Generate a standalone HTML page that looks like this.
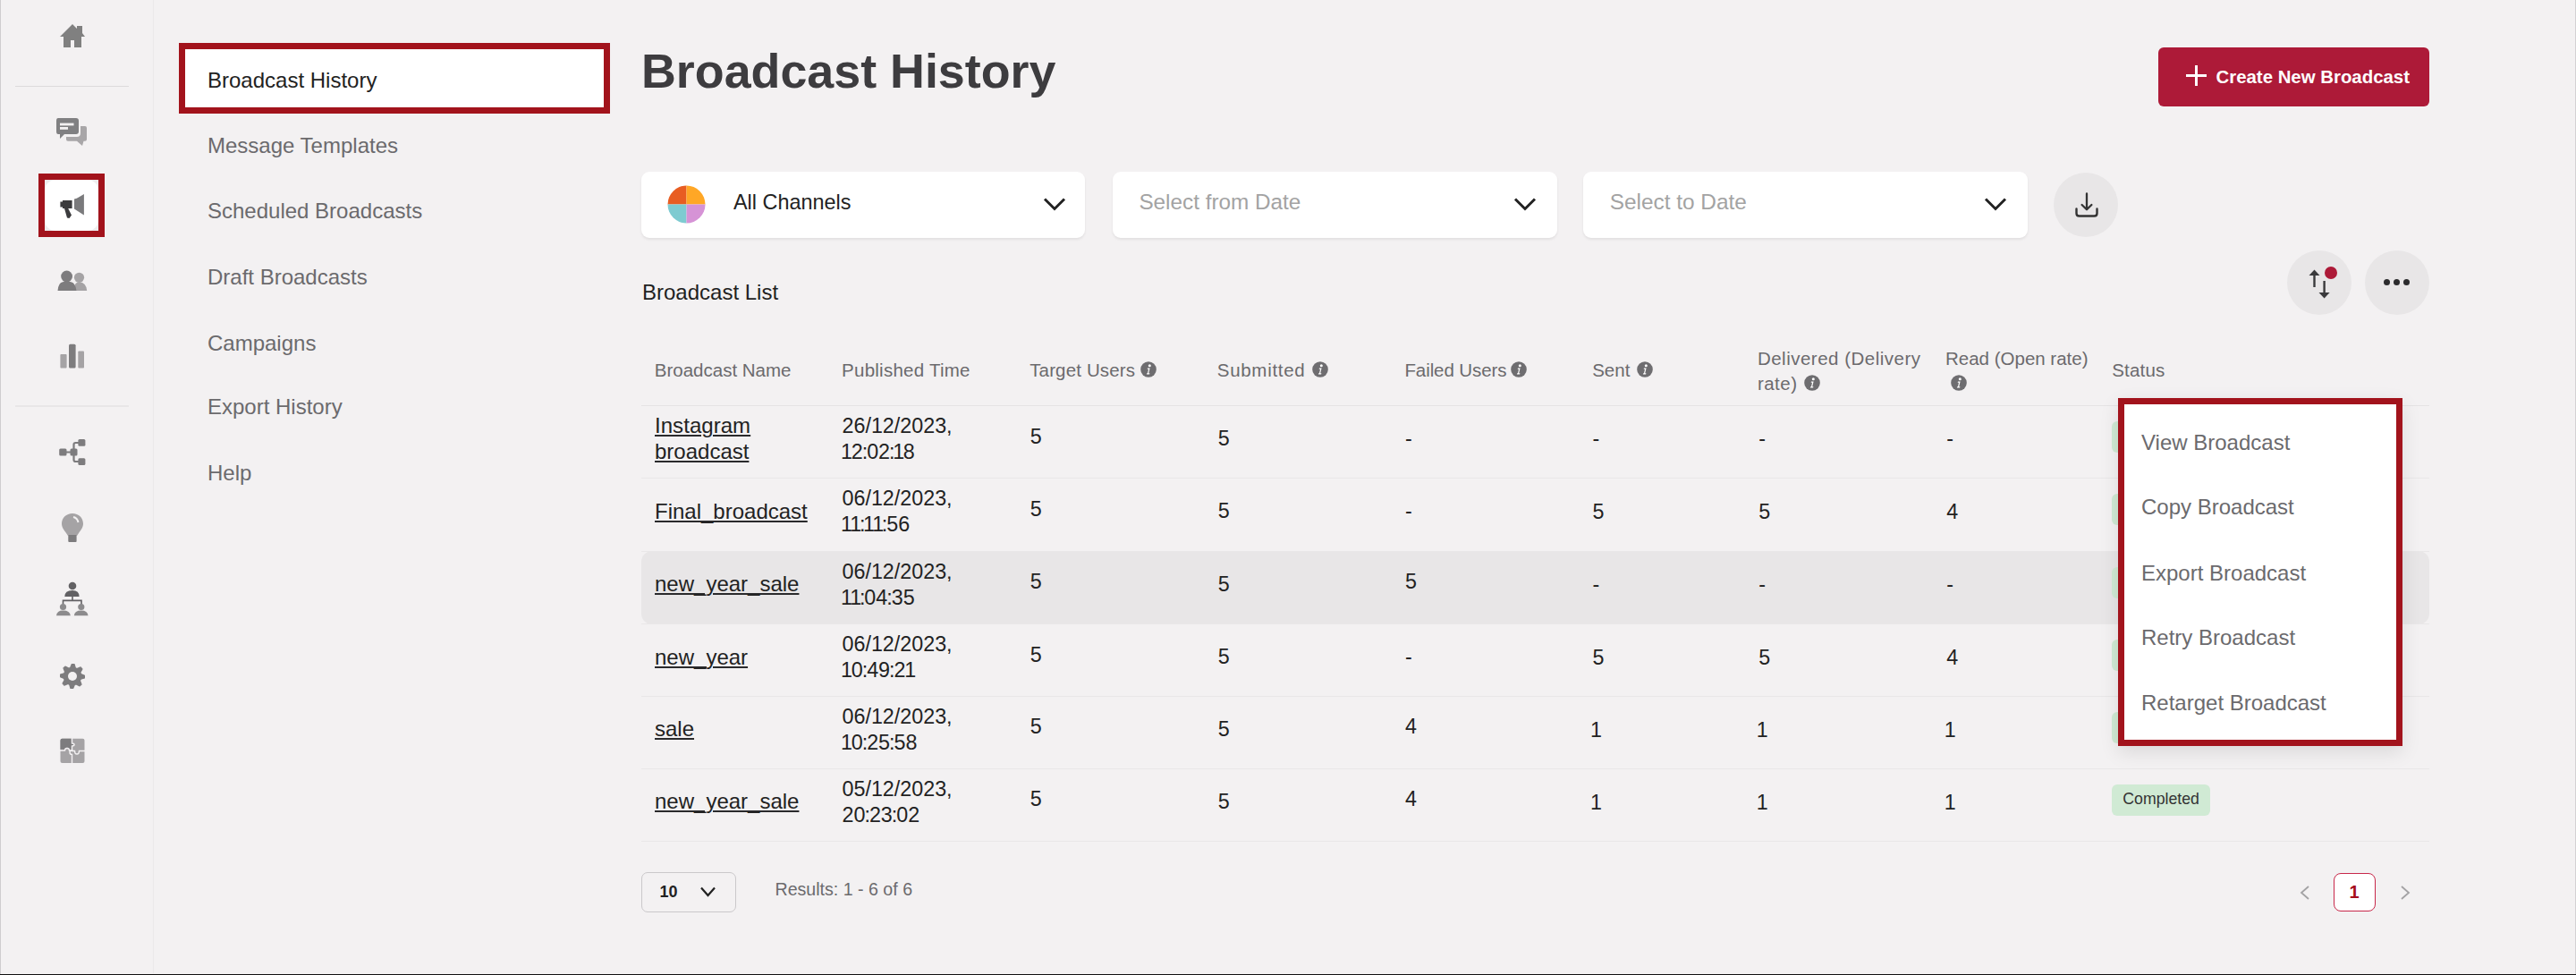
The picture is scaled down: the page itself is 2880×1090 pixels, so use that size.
<!DOCTYPE html>
<html><head><meta charset="utf-8"><title>Broadcast History</title>
<style>
html,body{margin:0;padding:0;background:#f3f1f2;}
body{width:2880px;height:1090px;overflow:hidden;position:relative;background:#f3f1f2;font-family:"Liberation Sans", sans-serif;}
.a{position:absolute;}
.t{position:absolute;white-space:nowrap;line-height:1;}
.n1{margin:0 -1.4px;}.nc{margin:0 -1px;}.m1{margin-left:-2.5px;}
u{text-decoration:underline;text-decoration-thickness:1.8px;text-underline-offset:2.4px;text-decoration-color:#2a2a2c;}
</style></head><body>

<div class="a" style="left:0.0px;top:0.0px;width:1.2px;height:1090.0px;background:#cfcdcf;"></div>
<div class="a" style="left:2879.0px;top:0.0px;width:1.0px;height:1090.0px;background:#d3d1d3;"></div>
<div class="a" style="left:0.0px;top:1088.5px;width:2880.0px;height:1.5px;background:#111;"></div>
<div class="a" style="left:171.0px;top:0.0px;width:1.0px;height:1088.0px;background:#ebe9ea;"></div>
<div class="a" style="left:17.0px;top:95.5px;width:127.0px;height:1.5px;background:#dcdadb;"></div>
<div class="a" style="left:17.0px;top:453.0px;width:127.0px;height:1.5px;background:#e8e6e7;"></div>
<svg class="a" style="left:66px;top:26px;" width="30" height="28" viewBox="0 0 30 28"><path d="M1 15 L15 1 L20 6 L20 3 L26 3 L26 11 L29 15 L25 15 L25 27 L17 27 L17 19 L13 19 L13 27 L5 27 L5 15 Z" fill="#808080"/></svg>
<svg class="a" style="left:62px;top:131px;" width="36" height="34" viewBox="0 0 36 34"><path d="M3 1 H23 Q26 1 26 4 V16 Q26 19 23 19 H10 L5 24 V19 H3 Q1 19 1 16 V4 Q1 1 3 1 Z" fill="#808082"/><rect x="5" y="6.6" width="15.5" height="2.8" fill="#f3f1f2"/><rect x="5" y="11" width="9" height="2.8" fill="#f3f1f2"/><path d="M28 10 H33 Q35 10 35 12 V24.7 Q35 26.7 33 26.7 H31.5 L30 32 L24 26.7 H14 Q12 26.7 12 24.7 V22 H24 Q28 22 28 18 Z" fill="#a8a6a8"/></svg>
<div class="a" style="left:42.5px;top:193.8px;width:74.1px;height:71.1px;border:7px solid #a2131c;box-sizing:border-box;background:#eeeced;"></div>
<div class="a" style="left:49.5px;top:200.8px;width:60.1px;height:57.1px;background:#fff;border-radius:12px;"></div>
<svg class="a" style="left:64px;top:214px;" width="34" height="34" viewBox="0 0 34 34"><path d="M3.4 11.5 H6 V10 H16.6 V19 H12.2 L16 26.5 L13.5 30 L11 29.5 L8 19 H6 V17.5 H3.4 Z" fill="#3b3b3d"/><path d="M19 8.6 Q22 8 24 6.5 L29.9 2.9 V26.4 L19 19.5 Z" fill="#7a7a7c"/></svg>
<svg class="a" style="left:63px;top:302px;" width="36" height="25" viewBox="0 0 36 25"><circle cx="25.5" cy="8.3" r="5.6" fill="#a5a3a5"/><path d="M20 23 L20.5 17 Q22 13.3 25.5 13.3 Q33.5 14 34.2 23 Z" fill="#a5a3a5"/><circle cx="11.6" cy="7" r="6.4" fill="#7d7c7e"/><path d="M1.5 23 Q2 14.5 7 13.2 Q9.5 12.6 11.6 12.6 Q14 12.6 16.5 13.2 Q21.5 14.5 22.5 23 Z" fill="#7d7c7e"/></svg>
<svg class="a" style="left:66px;top:384px;" width="30" height="29" viewBox="0 0 30 29"><rect x="1.4" y="11.9" width="7.2" height="15.7" rx="1" fill="#a5a3a5"/><rect x="11" y="0.8" width="7.6" height="26.8" rx="1.5" fill="#7d7c7e"/><rect x="21.3" y="8.5" width="6.7" height="19.1" rx="1" fill="#a5a3a5"/></svg>
<svg class="a" style="left:65px;top:490px;" width="32" height="32" viewBox="0 0 32 32"><rect x="1.2" y="11.5" width="8.3" height="8" rx="1.5" fill="#7d7c7e"/><rect x="13.5" y="11.5" width="8" height="8" rx="1.5" fill="#7d7c7e"/><rect x="22.4" y="1" width="8" height="7.7" rx="1.5" fill="#7d7c7e"/><rect x="22.4" y="22.3" width="8" height="7.7" rx="1.5" fill="#7d7c7e"/><path d="M9 15.5 H14 M17.5 12 V7 Q17.5 5 19.5 5 H23 M17.5 19 V24 Q17.5 26 19.5 26 H23" stroke="#7d7c7e" stroke-width="2.2" fill="none"/></svg>
<svg class="a" style="left:68px;top:573px;" width="26" height="34" viewBox="0 0 26 34"><path d="M13 1 C20 1 25 6 25 12.5 C25 17 22 20 20 23 L18 26 H8 L6 23 C4 20 1 17 1 12.5 C1 6 6 1 13 1 Z" fill="#a5a3a5"/><rect x="8.3" y="25" width="9.3" height="8" rx="1" fill="#7d7c7e"/><path d="M14 5 Q18.5 6 19.5 11" stroke="#f3f1f2" stroke-width="2" fill="none"/></svg>
<svg class="a" style="left:62px;top:649px;" width="38" height="41" viewBox="0 0 38 41"><circle cx="19" cy="6" r="4.3" fill="#626164"/><path d="M10.3 18 Q10.3 11 19 11 Q26.6 11 26.6 18 Z" fill="#626164"/><path d="M19 18 V22.4 M8.5 27 V22.4 H29 V27" stroke="#626164" stroke-width="1.6" fill="none"/><circle cx="8.5" cy="29.5" r="3.6" fill="#8c8b8d"/><path d="M1 39.3 Q1.5 33.5 8.5 33.5 Q16.3 33.5 16.8 39.3 Z" fill="#8c8b8d"/><circle cx="28.8" cy="29.5" r="3.6" fill="#8c8b8d"/><path d="M20.8 39.3 Q21.3 33.5 28.8 33.5 Q36 33.5 36.5 39.3 Z" fill="#8c8b8d"/></svg>
<svg class="a" style="left:67px;top:741.5px;" width="28" height="28" viewBox="0 0 28 28"><path d="M13.33,0.42 L16.00,0.55 L17.30,4.77 L19.04,5.59 L23.13,3.92 L24.92,5.90 L22.86,9.81 L23.51,11.62 L27.58,13.33 L27.45,16.00 L23.23,17.30 L22.41,19.04 L24.08,23.13 L22.10,24.92 L18.19,22.86 L16.38,23.51 L14.67,27.58 L12.00,27.45 L10.70,23.23 L8.96,22.41 L4.87,24.08 L3.08,22.10 L5.14,18.19 L4.49,16.38 L0.42,14.67 L0.55,12.00 L4.77,10.70 L5.59,8.96 L3.92,4.87 L5.90,3.08 L9.81,5.14 L11.62,4.49 Z" fill="#7d7c7e" stroke="#7d7c7e" stroke-width="1.2" stroke-linejoin="round"/><circle cx="14" cy="14" r="5" fill="#f3f1f2"/></svg>
<svg class="a" style="left:67px;top:825px;" width="28" height="29" viewBox="0 0 28 29"><rect x="0.5" y="0.7" width="27" height="27.4" rx="2" fill="#a5a3a5"/><path d="M0.5 2.7 Q0.5 0.7 2.5 0.7 H12.8 V5 Q15.5 5 15.5 7 Q15.5 9 12.8 9 V12.8 H10 Q10 10.5 8 10.5 Q6 10.5 6 12.8 H0.5 Z" fill="#7d7c7e"/><path d="M13.5 0 V6 Q16 6 16 7.5 Q16 9 13.5 9 V14 Q11 14 11 16 Q11 18.5 13.5 18.5 V29 M0 14 H5.5 Q5.5 11.5 8 11.5 Q10.5 11.5 10.5 14 H14 V14.5 H16.5 Q16.5 18 19 18 Q21.5 18 21.5 14.5 H28" stroke="#f3f1f2" stroke-width="1.4" fill="none"/></svg>
<div class="a" style="left:200.0px;top:48.0px;width:482.0px;height:78.5px;border:7px solid #a2131c;box-sizing:border-box;background:#fff;"></div>
<div class="t" style="left:232.0px;top:77.7px;font-size:24px;color:#222;font-weight:400;">Broadcast History</div>
<div class="t" style="left:232.0px;top:150.5px;font-size:24px;color:#6b6a6d;font-weight:400;">Message Templates</div>
<div class="t" style="left:232.0px;top:223.7px;font-size:24px;color:#6b6a6d;font-weight:400;">Scheduled Broadcasts</div>
<div class="t" style="left:232.0px;top:297.6px;font-size:24px;color:#6b6a6d;font-weight:400;">Draft Broadcasts</div>
<div class="t" style="left:232.0px;top:371.7px;font-size:24px;color:#6b6a6d;font-weight:400;">Campaigns</div>
<div class="t" style="left:232.0px;top:443.4px;font-size:24px;color:#6b6a6d;font-weight:400;">Export History</div>
<div class="t" style="left:232.0px;top:517.2px;font-size:24px;color:#6b6a6d;font-weight:400;">Help</div>
<div class="t" style="left:717.0px;top:53.1px;font-size:53.8px;color:#3d3c3f;font-weight:700;">Broadcast History</div>
<div class="a" style="left:2413.0px;top:53.0px;width:303.0px;height:66.0px;background:#ad1a38;border-radius:6px;"></div>
<svg class="a" style="left:2443px;top:72px;" width="25" height="25" viewBox="0 0 25 25"><path d="M12.5 1 V24 M1 12.5 H24" stroke="#fff" stroke-width="3"/></svg>
<div class="t" style="left:2477.5px;top:75.7px;font-size:20.4px;color:#fff;font-weight:700;">Create New Broadcast</div>
<div class="a" style="left:717.0px;top:192.0px;width:496.0px;height:73.5px;background:#fff;border-radius:9px;box-shadow:0 2px 3px rgba(0,0,0,0.07);"></div>
<div class="a" style="left:1243.6px;top:192.0px;width:497.4px;height:73.5px;background:#fff;border-radius:9px;box-shadow:0 2px 3px rgba(0,0,0,0.07);"></div>
<div class="a" style="left:1770.0px;top:192.0px;width:496.6px;height:73.5px;background:#fff;border-radius:9px;box-shadow:0 2px 3px rgba(0,0,0,0.07);"></div>
<svg class="a" style="left:746px;top:207px;" width="43" height="43" viewBox="0 0 43 43"><path d="M21.5 21.5 V0.5 A21 21 0 0 0 0.5 21.5 Z" fill="#e85d22"/><path d="M21.5 21.5 V0.5 A21 21 0 0 1 42.5 21.5 Z" fill="#ffa726"/><path d="M21.5 21.5 H0.5 A21 21 0 0 0 21.5 42.5 Z" fill="#7ecbd1"/><path d="M21.5 21.5 H42.5 A21 21 0 0 1 21.5 42.5 Z" fill="#d693d6"/></svg>
<div class="t" style="left:820.0px;top:215.2px;font-size:23.4px;color:#222;font-weight:400;">All Channels</div>
<div class="t" style="left:1273.4px;top:214.4px;font-size:24.3px;color:#a3a3a3;font-weight:400;">Select from Date</div>
<div class="t" style="left:1799.7px;top:214.3px;font-size:24.4px;color:#a3a3a3;font-weight:400;">Select to Date</div>
<svg class="a" style="left:1166px;top:220px;" width="26" height="17" viewBox="0 0 26 17"><path d="M2 2.5 L13 13.5 L24 2.5" stroke="#222" stroke-width="3" fill="none"/></svg>
<svg class="a" style="left:1692px;top:220px;" width="26" height="17" viewBox="0 0 26 17"><path d="M2 2.5 L13 13.5 L24 2.5" stroke="#222" stroke-width="3" fill="none"/></svg>
<svg class="a" style="left:2218px;top:220px;" width="26" height="17" viewBox="0 0 26 17"><path d="M2 2.5 L13 13.5 L24 2.5" stroke="#222" stroke-width="3" fill="none"/></svg>
<div class="a" style="left:2296.0px;top:192.5px;width:72.0px;height:72.0px;background:#e8e6e7;border-radius:50%;"></div>
<svg class="a" style="left:2318px;top:214px;" width="30" height="31" viewBox="0 0 30 31"><path d="M15 2.5 V20 M9.6 15 L15 20.3 L20.4 15" stroke="#333" stroke-width="2.3" fill="none" stroke-linecap="round" stroke-linejoin="round"/><path d="M3.5 19.5 V24.5 Q3.5 27.5 6.5 27.5 H23.5 Q26.5 27.5 26.5 24.5 V19.5" stroke="#333" stroke-width="2.4" fill="none" stroke-linecap="round"/></svg>
<div class="t" style="left:718.0px;top:315.4px;font-size:24px;color:#1f1f22;font-weight:400;">Broadcast List</div>
<div class="a" style="left:2557.0px;top:279.5px;width:72.0px;height:72.0px;background:#e8e6e7;border-radius:50%;"></div>
<div class="a" style="left:2644.0px;top:279.5px;width:72.0px;height:72.0px;background:#e8e6e7;border-radius:50%;"></div>
<svg class="a" style="left:2578px;top:298px;" width="32" height="38" viewBox="0 0 32 38"><path d="M9.5 23 V8" stroke="#3a3a3c" stroke-width="2.4"/><path d="M3.5 10 L9.5 3.5 L15.5 10 Z" fill="#3a3a3c"/><path d="M20.6 16 V31" stroke="#3a3a3c" stroke-width="2.4"/><path d="M14.5 29 L20.6 35.5 L26.6 29 Z" fill="#3a3a3c"/></svg>
<div class="a" style="left:2598.5px;top:298.0px;width:14.0px;height:14.0px;background:#ad1a38;border-radius:50%;"></div>
<div class="a" style="left:2665.2px;top:312.2px;width:7.0px;height:7.0px;background:#2b2b2d;border-radius:50%;"></div>
<div class="a" style="left:2676.1px;top:312.2px;width:7.0px;height:7.0px;background:#2b2b2d;border-radius:50%;"></div>
<div class="a" style="left:2686.9px;top:312.2px;width:7.0px;height:7.0px;background:#2b2b2d;border-radius:50%;"></div>
<div class="t" style="left:731.8px;top:403.6px;font-size:20.5px;color:#6b6a6d;font-weight:400;letter-spacing:0px;">Broadcast Name</div>
<div class="t" style="left:941.1px;top:403.6px;font-size:20.5px;color:#6b6a6d;font-weight:400;letter-spacing:0.25px;">Published Time</div>
<div class="t" style="left:1151.2px;top:403.6px;font-size:20.5px;color:#6b6a6d;font-weight:400;letter-spacing:0.15px;">Target Users</div>
<svg class="a" style="left:1274.7px;top:403.5px;" width="18" height="18" viewBox="0 0 18 18"><circle cx="9" cy="9" r="8.8" fill="#6e6d70"/><circle cx="10.3" cy="4.7" r="1.5" fill="#fff"/><path d="M8 7.6 H10.6 L9.2 13.2 H10.4 L10.1 14.4 H6.9 L7.2 13.2 H8 L9 8.8 H7.7 Z" fill="#fff"/></svg>
<div class="t" style="left:1360.8px;top:403.6px;font-size:20.5px;color:#6b6a6d;font-weight:400;letter-spacing:0.7px;">Submitted</div>
<svg class="a" style="left:1466.5px;top:403.5px;" width="18" height="18" viewBox="0 0 18 18"><circle cx="9" cy="9" r="8.8" fill="#6e6d70"/><circle cx="10.3" cy="4.7" r="1.5" fill="#fff"/><path d="M8 7.6 H10.6 L9.2 13.2 H10.4 L10.1 14.4 H6.9 L7.2 13.2 H8 L9 8.8 H7.7 Z" fill="#fff"/></svg>
<div class="t" style="left:1570.4px;top:403.6px;font-size:20.5px;color:#6b6a6d;font-weight:400;letter-spacing:-0.08px;">Failed Users</div>
<svg class="a" style="left:1689px;top:403.5px;" width="18" height="18" viewBox="0 0 18 18"><circle cx="9" cy="9" r="8.8" fill="#6e6d70"/><circle cx="10.3" cy="4.7" r="1.5" fill="#fff"/><path d="M8 7.6 H10.6 L9.2 13.2 H10.4 L10.1 14.4 H6.9 L7.2 13.2 H8 L9 8.8 H7.7 Z" fill="#fff"/></svg>
<div class="t" style="left:1780.2px;top:403.6px;font-size:20.5px;color:#6b6a6d;font-weight:400;">Sent</div>
<svg class="a" style="left:1830px;top:403.5px;" width="18" height="18" viewBox="0 0 18 18"><circle cx="9" cy="9" r="8.8" fill="#6e6d70"/><circle cx="10.3" cy="4.7" r="1.5" fill="#fff"/><path d="M8 7.6 H10.6 L9.2 13.2 H10.4 L10.1 14.4 H6.9 L7.2 13.2 H8 L9 8.8 H7.7 Z" fill="#fff"/></svg>
<div class="t" style="left:1964.9px;top:390.6px;font-size:20.5px;color:#6b6a6d;font-weight:400;letter-spacing:0.5px;">Delivered (Delivery</div>
<div class="t" style="left:1964.9px;top:418.6px;font-size:20.5px;color:#6b6a6d;font-weight:400;letter-spacing:0.5px;">rate)</div>
<svg class="a" style="left:2016.8px;top:419.4px;" width="18" height="18" viewBox="0 0 18 18"><circle cx="9" cy="9" r="8.8" fill="#6e6d70"/><circle cx="10.3" cy="4.7" r="1.5" fill="#fff"/><path d="M8 7.6 H10.6 L9.2 13.2 H10.4 L10.1 14.4 H6.9 L7.2 13.2 H8 L9 8.8 H7.7 Z" fill="#fff"/></svg>
<div class="t" style="left:2175.0px;top:390.6px;font-size:20.5px;color:#6b6a6d;font-weight:400;letter-spacing:0px;">Read (Open rate)</div>
<svg class="a" style="left:2181px;top:419.4px;" width="18" height="18" viewBox="0 0 18 18"><circle cx="9" cy="9" r="8.8" fill="#6e6d70"/><circle cx="10.3" cy="4.7" r="1.5" fill="#fff"/><path d="M8 7.6 H10.6 L9.2 13.2 H10.4 L10.1 14.4 H6.9 L7.2 13.2 H8 L9 8.8 H7.7 Z" fill="#fff"/></svg>
<div class="t" style="left:2361.2px;top:403.6px;font-size:20.5px;color:#6b6a6d;font-weight:400;letter-spacing:0.2px;">Status</div>
<div class="a" style="left:717.0px;top:615.5px;width:1999.0px;height:82.0px;background:#e8e6e7;border-radius:12px;"></div>
<div class="a" style="left:717.0px;top:453.0px;width:1999.0px;height:1.2px;background:#e5e3e4;"></div>
<div class="a" style="left:717.0px;top:534.0px;width:1999.0px;height:1.2px;background:#e9e7e8;"></div>
<div class="a" style="left:717.0px;top:615.5px;width:1999.0px;height:1.2px;background:#e9e7e8;"></div>
<div class="a" style="left:717.0px;top:697.0px;width:1999.0px;height:1.2px;background:#e9e7e8;"></div>
<div class="a" style="left:717.0px;top:777.5px;width:1999.0px;height:1.2px;background:#e9e7e8;"></div>
<div class="a" style="left:717.0px;top:858.5px;width:1999.0px;height:1.2px;background:#e9e7e8;"></div>
<div class="a" style="left:717.0px;top:939.5px;width:1999.0px;height:1.2px;background:#e9e7e8;"></div>
<div class="t" style="left:732.0px;top:464.3px;font-size:24px;color:#222;font-weight:400;letter-spacing:0.05px;"><u>Instagram</u></div>
<div class="t" style="left:732.0px;top:493.3px;font-size:24px;color:#222;font-weight:400;"><u>broadcast</u></div>
<div class="t" style="left:941.5px;top:465.3px;font-size:23.3px;color:#222;font-weight:400;">26/12/2023,</div>
<div class="t" style="left:941.5px;top:494.3px;font-size:23.3px;color:#222;font-weight:400;"><span class="n1">1</span>2<span class="nc">:</span>02<span class="nc">:</span><span class="n1">1</span>8</div>
<div class="t" style="left:1151.7px;top:476.8px;font-size:23.3px;color:#222;font-weight:400;">5</div>
<div class="t" style="left:1361.8px;top:479.3px;font-size:23.3px;color:#222;font-weight:400;">5</div>
<div class="t" style="left:1571.0px;top:479.3px;font-size:23.3px;color:#222;font-weight:400;">-</div>
<div class="t" style="left:1780.5px;top:479.3px;font-size:23.3px;color:#222;font-weight:400;">-</div>
<div class="t" style="left:1966.2px;top:479.3px;font-size:23.3px;color:#222;font-weight:400;">-</div>
<div class="t" style="left:2176.2px;top:479.3px;font-size:23.3px;color:#222;font-weight:400;">-</div>
<div class="a" style="left:2361.0px;top:471.0px;width:109.5px;height:35.0px;background:#d0ead4;border-radius:6px;"></div>
<div class="t" style="left:732.0px;top:559.7px;font-size:24px;color:#222;font-weight:400;"><u>Final_broadcast</u></div>
<div class="t" style="left:941.5px;top:546.3px;font-size:23.3px;color:#222;font-weight:400;">06/12/2023,</div>
<div class="t" style="left:941.5px;top:575.3px;font-size:23.3px;color:#222;font-weight:400;"><span class="n1">1</span><span class="n1">1</span><span class="nc">:</span><span class="n1">1</span><span class="n1">1</span><span class="nc">:</span>56</div>
<div class="t" style="left:1151.7px;top:557.8px;font-size:23.3px;color:#222;font-weight:400;">5</div>
<div class="t" style="left:1361.8px;top:560.3px;font-size:23.3px;color:#222;font-weight:400;">5</div>
<div class="t" style="left:1571.0px;top:560.3px;font-size:23.3px;color:#222;font-weight:400;">-</div>
<div class="t" style="left:1780.5px;top:561.3px;font-size:23.3px;color:#222;font-weight:400;">5</div>
<div class="t" style="left:1966.2px;top:561.3px;font-size:23.3px;color:#222;font-weight:400;">5</div>
<div class="t" style="left:2176.2px;top:561.3px;font-size:23.3px;color:#222;font-weight:400;">4</div>
<div class="a" style="left:2361.0px;top:552.0px;width:109.5px;height:35.0px;background:#d0ead4;border-radius:6px;"></div>
<div class="t" style="left:732.0px;top:641.2px;font-size:24px;color:#222;font-weight:400;"><u>new_year_sale</u></div>
<div class="t" style="left:941.5px;top:627.8px;font-size:23.3px;color:#222;font-weight:400;">06/12/2023,</div>
<div class="t" style="left:941.5px;top:656.8px;font-size:23.3px;color:#222;font-weight:400;"><span class="n1">1</span><span class="n1">1</span><span class="nc">:</span>04<span class="nc">:</span>35</div>
<div class="t" style="left:1151.7px;top:639.3px;font-size:23.3px;color:#222;font-weight:400;">5</div>
<div class="t" style="left:1361.8px;top:641.8px;font-size:23.3px;color:#222;font-weight:400;">5</div>
<div class="t" style="left:1571.0px;top:639.3px;font-size:23.3px;color:#222;font-weight:400;">5</div>
<div class="t" style="left:1780.5px;top:641.8px;font-size:23.3px;color:#222;font-weight:400;">-</div>
<div class="t" style="left:1966.2px;top:641.8px;font-size:23.3px;color:#222;font-weight:400;">-</div>
<div class="t" style="left:2176.2px;top:641.8px;font-size:23.3px;color:#222;font-weight:400;">-</div>
<div class="a" style="left:2361.0px;top:633.5px;width:109.5px;height:35.0px;background:#d0ead4;border-radius:6px;"></div>
<div class="t" style="left:732.0px;top:722.7px;font-size:24px;color:#222;font-weight:400;"><u>new_year</u></div>
<div class="t" style="left:941.5px;top:709.3px;font-size:23.3px;color:#222;font-weight:400;">06/12/2023,</div>
<div class="t" style="left:941.5px;top:738.3px;font-size:23.3px;color:#222;font-weight:400;"><span class="n1">1</span>0<span class="nc">:</span>49<span class="nc">:</span>2<span class="n1">1</span></div>
<div class="t" style="left:1151.7px;top:720.8px;font-size:23.3px;color:#222;font-weight:400;">5</div>
<div class="t" style="left:1361.8px;top:723.3px;font-size:23.3px;color:#222;font-weight:400;">5</div>
<div class="t" style="left:1571.0px;top:723.3px;font-size:23.3px;color:#222;font-weight:400;">-</div>
<div class="t" style="left:1780.5px;top:724.3px;font-size:23.3px;color:#222;font-weight:400;">5</div>
<div class="t" style="left:1966.2px;top:724.3px;font-size:23.3px;color:#222;font-weight:400;">5</div>
<div class="t" style="left:2176.2px;top:724.3px;font-size:23.3px;color:#222;font-weight:400;">4</div>
<div class="a" style="left:2361.0px;top:715.0px;width:109.5px;height:35.0px;background:#d0ead4;border-radius:6px;"></div>
<div class="t" style="left:732.0px;top:803.2px;font-size:24px;color:#222;font-weight:400;"><u>sale</u></div>
<div class="t" style="left:941.5px;top:789.8px;font-size:23.3px;color:#222;font-weight:400;">06/12/2023,</div>
<div class="t" style="left:941.5px;top:818.8px;font-size:23.3px;color:#222;font-weight:400;"><span class="n1">1</span>0<span class="nc">:</span>25<span class="nc">:</span>58</div>
<div class="t" style="left:1151.7px;top:801.3px;font-size:23.3px;color:#222;font-weight:400;">5</div>
<div class="t" style="left:1361.8px;top:803.8px;font-size:23.3px;color:#222;font-weight:400;">5</div>
<div class="t" style="left:1571.0px;top:801.3px;font-size:23.3px;color:#222;font-weight:400;">4</div>
<div class="t" style="left:1780.5px;top:804.8px;font-size:23.3px;color:#222;font-weight:400;"><span class="m1">1</span></div>
<div class="t" style="left:1966.2px;top:804.8px;font-size:23.3px;color:#222;font-weight:400;"><span class="m1">1</span></div>
<div class="t" style="left:2176.2px;top:804.8px;font-size:23.3px;color:#222;font-weight:400;"><span class="m1">1</span></div>
<div class="a" style="left:2361.0px;top:795.5px;width:109.5px;height:35.0px;background:#d0ead4;border-radius:6px;"></div>
<div class="t" style="left:732.0px;top:884.2px;font-size:24px;color:#222;font-weight:400;"><u>new_year_sale</u></div>
<div class="t" style="left:941.5px;top:870.8px;font-size:23.3px;color:#222;font-weight:400;">05/12/2023,</div>
<div class="t" style="left:941.5px;top:899.8px;font-size:23.3px;color:#222;font-weight:400;">20<span class="nc">:</span>23<span class="nc">:</span>02</div>
<div class="t" style="left:1151.7px;top:882.3px;font-size:23.3px;color:#222;font-weight:400;">5</div>
<div class="t" style="left:1361.8px;top:884.8px;font-size:23.3px;color:#222;font-weight:400;">5</div>
<div class="t" style="left:1571.0px;top:882.3px;font-size:23.3px;color:#222;font-weight:400;">4</div>
<div class="t" style="left:1780.5px;top:885.8px;font-size:23.3px;color:#222;font-weight:400;"><span class="m1">1</span></div>
<div class="t" style="left:1966.2px;top:885.8px;font-size:23.3px;color:#222;font-weight:400;"><span class="m1">1</span></div>
<div class="t" style="left:2176.2px;top:885.8px;font-size:23.3px;color:#222;font-weight:400;"><span class="m1">1</span></div>
<div class="a" style="left:2361.0px;top:876.5px;width:109.5px;height:35.0px;background:#d0ead4;border-radius:6px;"></div>
<div class="t" style="left:2373.3px;top:885.1px;font-size:17.7px;color:#333;font-weight:400;">Completed</div>
<div class="a" style="left:2368.0px;top:445.0px;width:318.0px;height:389.2px;border:7px solid #a2131c;box-sizing:border-box;background:#fff;box-shadow:0 7px 20px rgba(0,0,0,0.10);"></div>
<div class="t" style="left:2394.0px;top:482.9px;font-size:24px;color:#6b6a6d;font-weight:400;">View Broadcast</div>
<div class="t" style="left:2394.0px;top:555.1px;font-size:24px;color:#6b6a6d;font-weight:400;">Copy Broadcast</div>
<div class="t" style="left:2394.0px;top:628.5px;font-size:24px;color:#6b6a6d;font-weight:400;">Export Broadcast</div>
<div class="t" style="left:2394.0px;top:701.1px;font-size:24px;color:#6b6a6d;font-weight:400;">Retry Broadcast</div>
<div class="t" style="left:2394.0px;top:773.7px;font-size:24px;color:#6b6a6d;font-weight:400;">Retarget Broadcast</div>
<div class="a" style="left:717.4px;top:975.2px;width:105.3px;height:44.4px;border:1.2px solid #cac8ca;box-sizing:border-box;border-radius:7px;"></div>
<div class="t" style="left:737.6px;top:987.6px;font-size:18px;color:#222;font-weight:700;">10</div>
<svg class="a" style="left:782px;top:990px;" width="19" height="14" viewBox="0 0 19 14"><path d="M2 2.5 L9.5 11 L17 2.5" stroke="#222" stroke-width="2.2" fill="none"/></svg>
<div class="t" style="left:866.5px;top:985.4px;font-size:19.6px;color:#6b6a6d;font-weight:400;">Results: 1 - 6 of 6</div>
<div class="a" style="left:2609.3px;top:976.0px;width:46.7px;height:43.4px;background:#fff;border:1.2px solid #c8284a;box-sizing:border-box;border-radius:8px;"></div>
<div class="t" style="left:2626.5px;top:986.6px;font-size:20px;color:#a50e1c;font-weight:700;">1</div>
<svg class="a" style="left:2569px;top:989px;" width="16" height="18" viewBox="0 0 16 18"><path d="M12 2 L4 9 L12 16" stroke="#a3a2a4" stroke-width="1.8" fill="none"/></svg>
<svg class="a" style="left:2681px;top:989px;" width="16" height="18" viewBox="0 0 16 18"><path d="M4 2 L12 9 L4 16" stroke="#a3a2a4" stroke-width="1.8" fill="none"/></svg>
</body></html>
